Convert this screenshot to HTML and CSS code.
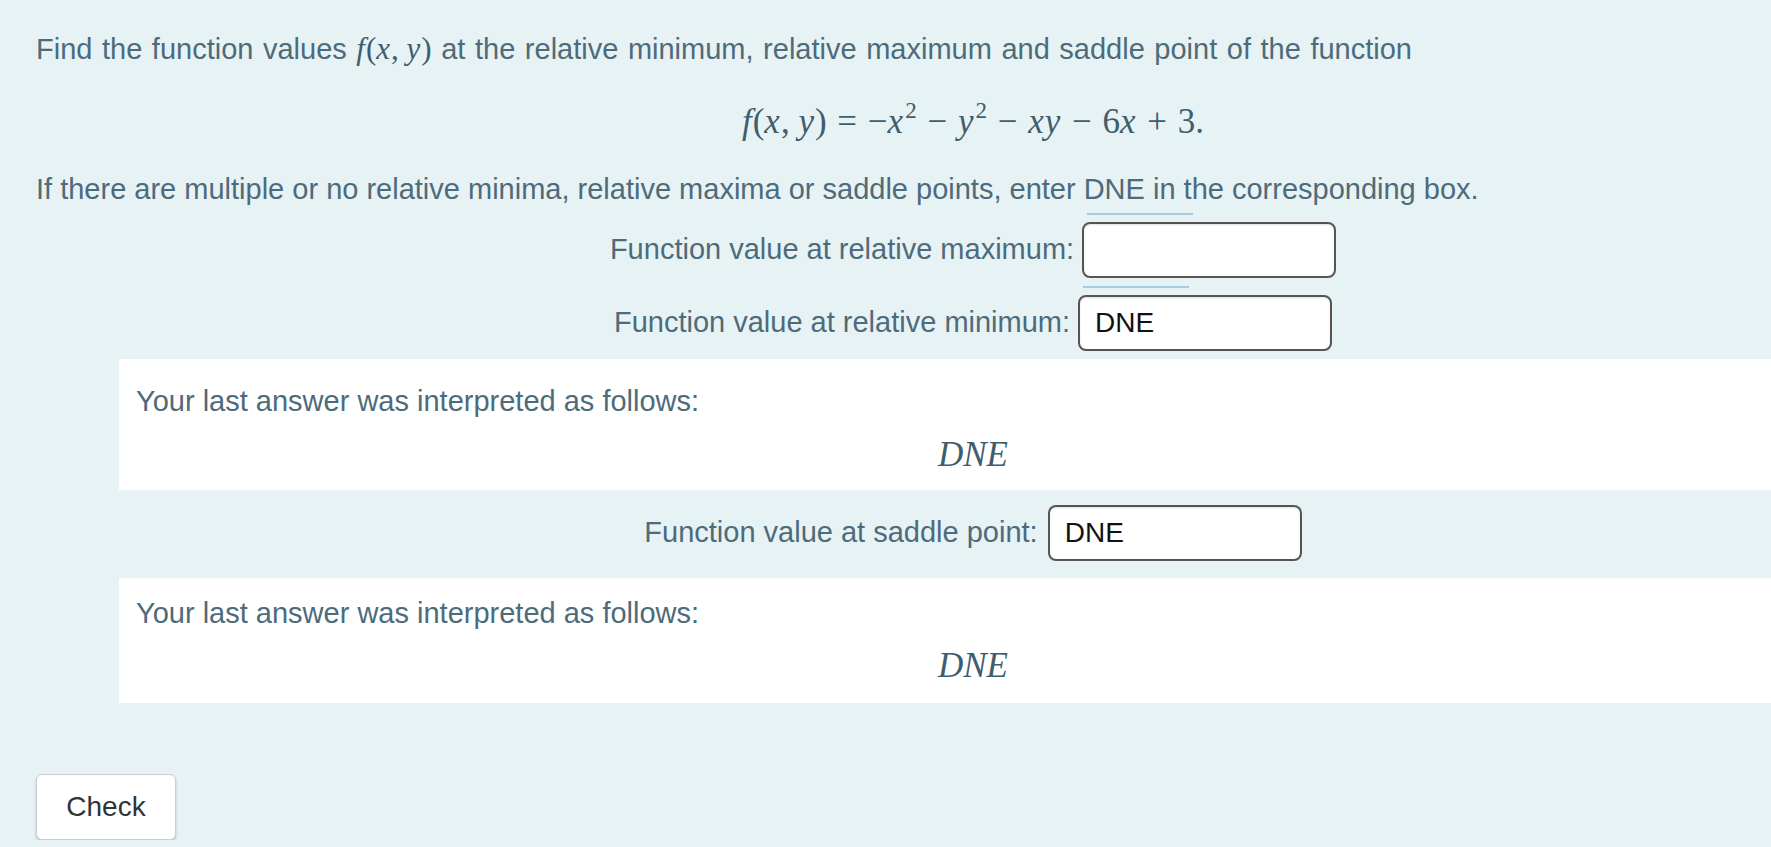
FILE: index.html
```html
<!DOCTYPE html>
<html lang="en">
<head>
<meta charset="utf-8">
<title>STACK question</title>
<link rel="stylesheet" href="styles.css">
</head>
<body>
<div class="page">
  <p class="text intro">Find the function values <span class="math inline"><i>f</i>(<i>x</i>, <i>y</i>)</span> at the relative minimum, relative maximum and saddle point of the function</p>
  <div class="display"><span class="math"><i>f</i>(<i>x</i>, <i>y</i>) <span class="op">=</span> −<i>x</i><sup>2</sup> <span class="op">−</span> <i>y</i><sup>2</sup> <span class="op">−</span> <i>x</i><i>y</i> <span class="op">−</span> 6<i>x</i> <span class="op">+</span> 3.</span></div>
  <p class="text note">If there are multiple or no relative minima, relative maxima or saddle points, enter DNE in the corresponding box.</p>

  <div class="row row-max">
    <label class="text label" for="ans1">Function value at relative maximum:</label>
    <span class="field hint"><input id="ans1" class="answer" type="text" value=""></span>
  </div>
  <div class="row row-min">
    <label class="text label" for="ans2">Function value at relative minimum:</label>
    <span class="field hint"><input id="ans2" class="answer" type="text" value="DNE"></span>
  </div>
  <div class="feedback first">
    <p class="text fb-title">Your last answer was interpreted as follows:</p>
    <div class="fb-value"><i>DNE</i></div>
  </div>
  <div class="row row-saddle">
    <label class="text label" for="ans3">Function value at saddle point:</label>
    <span class="field"><input id="ans3" class="answer" type="text" value="DNE"></span>
  </div>
  <div class="feedback second">
    <p class="text fb-title">Your last answer was interpreted as follows:</p>
    <div class="fb-value"><i>DNE</i></div>
  </div>
  <button class="check" type="button">Check</button>
</div>
</body>
</html>
```
FILE: styles.css
```css
html, body {
  margin: 0;
  padding: 0;
}
body {
  background: #e7f2f5;
  overflow: hidden;
  font-family: "Liberation Sans", Arial, sans-serif;
}
.page {
  margin-left: 36px;
  width: 1874px;
  padding-top: 29px;
}
.text {
  color: #4d6b7a;
  font-size: 29px;
  line-height: 40px;
  margin: 0;
}
.intro {
  word-spacing: 1.5px;
}
.math {
  font-family: "Liberation Serif", "Times New Roman", serif;
  color: #3f5d6c;
  font-size: 35px;
  word-spacing: 0;
}
.math.inline {
  font-size: 31px;
}
.math i {
  padding-right: 1px;
}
.math .op {
  margin: 0 2px;
}
.math sup {
  font-size: 23px;
  line-height: 0;
  vertical-align: 15px;
  margin-left: 1px;
}
.display {
  margin-top: 33px;
  line-height: 40px;
  text-align: center;
}
.note {
  margin-top: 21px;
}
.row {
  display: flex;
  justify-content: center;
  align-items: center;
  gap: 8px;
}
.row-max { margin-top: 13px; }
.row-min { margin-top: 17px; }
.row-saddle { margin-top: 15px; gap: 10px; }
.label {
  white-space: nowrap;
  position: relative;
  top: -1px;
}
.field {
  position: relative;
  display: block;
}
.hint::before {
  content: "";
  position: absolute;
  left: 5px;
  top: -9px;
  width: 106px;
  height: 2px;
  background: #a8cbe5;
}
.answer {
  display: block;
  box-sizing: border-box;
  width: 254px;
  height: 56px;
  border: 2px solid #555;
  border-radius: 8px;
  background: #fff;
  box-shadow: inset 0 1px 2px rgba(0, 0, 0, 0.12);
  padding: 0 15px;
  font-family: "Liberation Sans", Arial, sans-serif;
  font-size: 28px;
  color: #111;
  outline: none;
}
.feedback {
  background: #fff;
  margin: 0 83px;
  padding: 0 17px;
}
.feedback.first {
  margin-top: 8px;
  padding-top: 27px;
  padding-bottom: 15px;
}
.feedback.second {
  margin-top: 17px;
  padding-top: 20px;
  padding-bottom: 17px;
}
.fb-title {
  line-height: 30px;
}
.first .fb-title { margin-bottom: 19px; }
.second .fb-title { margin-bottom: 18px; }
.fb-value {
  text-align: center;
  font-family: "Liberation Serif", "Times New Roman", serif;
  font-size: 35px;
  line-height: 40px;
  color: #3f5d6c;
}
.check {
  display: block;
  margin-top: 71px;
  width: 140px;
  height: 66px;
  background: #fff;
  border: 1px solid #c9cdd0;
  border-radius: 6px;
  box-shadow: 0 2px 3px rgba(0, 0, 0, 0.18);
  font-family: "Liberation Sans", Arial, sans-serif;
  font-size: 28px;
  color: #333;
  padding: 0;
}
```
